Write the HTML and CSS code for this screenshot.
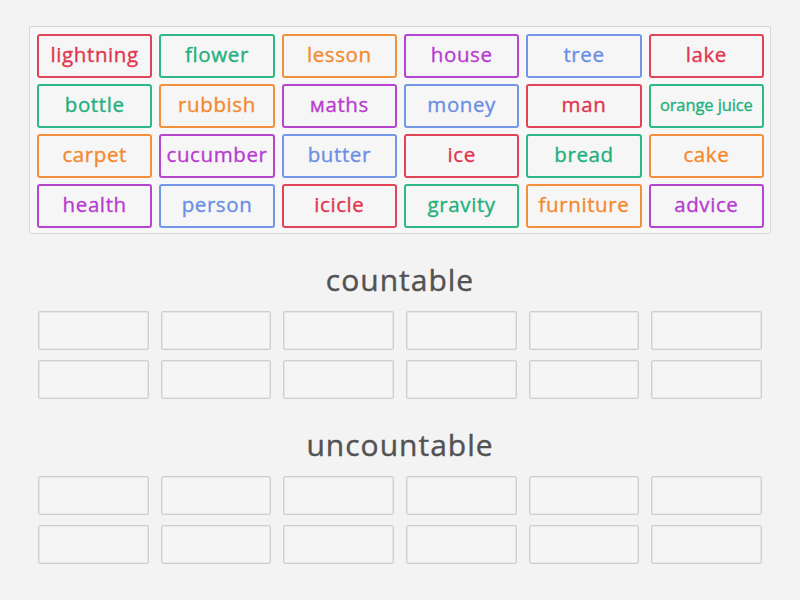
FILE: index.html
```html
<!DOCTYPE html>
<html lang="en">
<head>
<meta charset="utf-8">
<title>Group sort</title>
<link rel="stylesheet" href="styles.css">
</head>
<body>
<div class="page">
  <div class="bank">
    <div class="tile red">lightning</div>
    <div class="tile green">flower</div>
    <div class="tile orange">lesson</div>
    <div class="tile purple">house</div>
    <div class="tile blue">tree</div>
    <div class="tile red">lake</div>

    <div class="tile green">bottle</div>
    <div class="tile orange">rubbish</div>
    <div class="tile purple">мaths</div>
    <div class="tile blue">money</div>
    <div class="tile red">man</div>
    <div class="tile green small">orange juice</div>

    <div class="tile orange">carpet</div>
    <div class="tile purple">cucumber</div>
    <div class="tile blue">butter</div>
    <div class="tile red">ice</div>
    <div class="tile green">bread</div>
    <div class="tile orange">cake</div>

    <div class="tile purple">health</div>
    <div class="tile blue">person</div>
    <div class="tile red">icicle</div>
    <div class="tile green">gravity</div>
    <div class="tile orange">furniture</div>
    <div class="tile purple">advice</div>
  </div>

  <section class="group">
    <h2 class="group-title">countable</h2>
    <div class="slots">
      <div class="slot"></div><div class="slot"></div><div class="slot"></div>
      <div class="slot"></div><div class="slot"></div><div class="slot"></div>
      <div class="slot"></div><div class="slot"></div><div class="slot"></div>
      <div class="slot"></div><div class="slot"></div><div class="slot"></div>
    </div>
  </section>

  <section class="group">
    <h2 class="group-title">uncountable</h2>
    <div class="slots">
      <div class="slot"></div><div class="slot"></div><div class="slot"></div>
      <div class="slot"></div><div class="slot"></div><div class="slot"></div>
      <div class="slot"></div><div class="slot"></div><div class="slot"></div>
      <div class="slot"></div><div class="slot"></div><div class="slot"></div>
    </div>
  </section>
</div>
</body>
</html>
```

FILE: styles.css
```css
html, body {
  margin: 0;
  padding: 0;
  background: #f4f3f3;
  width: 800px;
  height: 600px;
  overflow: hidden;
  font-family: "Open Sans", "Noto Sans", "DejaVu Sans", sans-serif;
}

.page {
  padding: 26px 29px 0 29px;
}

.bank {
  box-sizing: border-box;
  width: 742px;
  height: 208px;
  padding: 7px 6px 7px 7px;
  background: #f7f7f7;
  border: 1px solid #d6d6d6;
  border-radius: 2px;
  display: grid;
  grid-template-columns: repeat(6, 1fr);
  grid-auto-rows: 44px;
  column-gap: 7px;
  row-gap: 6px;
}

.tile {
  box-sizing: border-box;
  border: 2px solid;
  border-radius: 3px;
  background: #f6f6f6;
  display: flex;
  align-items: center;
  justify-content: center;
  font-size: 20.5px;
  font-weight: 500;
  letter-spacing: 0.6px;
  white-space: nowrap;
  padding-bottom: 5px;
  -webkit-text-stroke: 0.35px currentColor;
}

.tile.small {
  font-size: 16.5px;
  letter-spacing: -0.1px;
  padding-bottom: 3px;
}

.red { color: #e0354e; border-color: #e04459; }
.green { color: #1fb07c; border-color: #2db886; }
.orange { color: #f4892d; border-color: #f3903b; }
.purple { color: #b73ccf; border-color: #b746cf; }
.blue { color: #6b8fe4; border-color: #7397e6; }

.group {
  padding-top: 26px;
}

.group-title {
  margin: 0 0 11px 0;
  height: 40px;
  line-height: 40px;
  text-align: center;
  font-size: 30px;
  font-weight: 500;
  letter-spacing: 1px;
  color: #525252;
  -webkit-text-stroke: 0.4px currentColor;
}

.slots {
  margin-left: 9px;
  width: 724px;
  display: grid;
  grid-template-columns: repeat(6, 1fr);
  grid-auto-rows: 39px;
  column-gap: 12px;
  row-gap: 10px;
}

.slot {
  box-sizing: border-box;
  border: 1px solid #cfcfcf;
  border-radius: 2px;
  background: #f6f5f5;
  box-shadow: inset 0 0 0 1px #e6e6e6;
}
```
